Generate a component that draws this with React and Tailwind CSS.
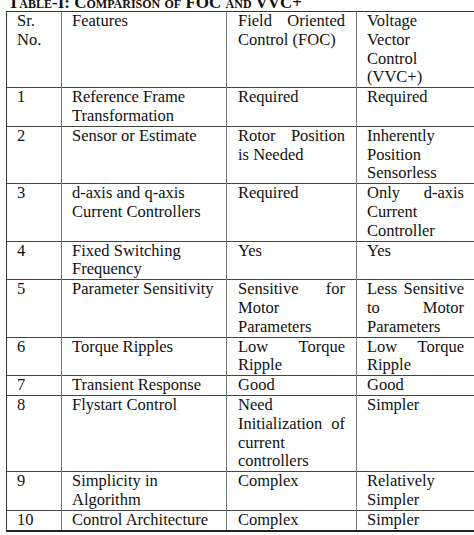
import React from "react";

const rows = [
  ["1", "Reference Frame Transformation", "Required", "Required"],
  ["2", "Sensor or Estimate", "Rotor Position is Needed", "Inherently Position Sensorless"],
  ["3", "d-axis and q-axis Current Controllers", "Required", "Only d-axis Current Controller"],
  ["4", "Fixed Switching Frequency", "Yes", "Yes"],
  ["5", "Parameter Sensitivity", "Sensitive for Motor Parameters", "Less Sensitive to Motor Parameters"],
  ["6", "Torque Ripples", "Low Torque Ripple", "Low Torque Ripple"],
  ["7", "Transient Response", "Good", "Good"],
  ["8", "Flystart Control", "Need Initialization of current controllers", "Simpler"],
  ["9", "Simplicity in Algorithm", "Complex", "Relatively Simpler"],
  ["10", "Control Architecture", "Complex", "Simpler"],
];

export default function App() {
  return (
    <div className="w-[474px] h-[535px] overflow-hidden bg-white text-[#111] font-['Liberation_Serif','Times_New_Roman',serif]">
      <div className="-mt-[6px] h-[17px] pl-[8px] text-[17px] leading-none font-bold [font-variant:small-caps] whitespace-nowrap">
        Table-I: Comparison of FOC and VVC+
      </div>
      <table className="ml-[6px] w-[469px] table-fixed border-collapse text-[16.5px] leading-[18.8px]">
        <colgroup>
          <col className="w-[55px]" />
          <col className="w-[165px]" />
          <col className="w-[130px]" />
          <col className="w-[119px]" />
        </colgroup>
        <thead>
          <tr className="border-t border-[#333]">
            <th className="border-l border-l-[#333] border-r border-r-[#777] px-[10px] py-0 text-left font-normal align-top">
              Sr. No.
            </th>
            <th className="border-r border-r-[#777] px-[10px] py-0 text-left font-normal align-top">
              Features
            </th>
            <th className="border-r border-r-[#777] pl-[11px] pr-[11px] py-0 text-justify font-normal align-top">
              Field Oriented Control (FOC)
            </th>
            <th className="border-r border-r-[#333] pl-[10px] pr-[11px] py-0 text-left font-normal align-top">
              Voltage
              <br />
              Vector
              <br />
              Control
              <br />
              (VVC+)
            </th>
          </tr>
        </thead>
        <tbody>
          {rows.map((r, i) => (
            <tr
              key={r[0]}
              className={
                i === rows.length - 1
                  ? "border-t border-t-[#444] border-b-2 border-b-[#222]"
                  : "border-t border-t-[#444]"
              }
            >
              <td className="border-l border-l-[#333] border-r border-r-[#777] px-[10px] py-0 align-top">
                {r[0]}
              </td>
              <td className="border-r border-r-[#777] px-[10px] py-0 align-top">{r[1]}</td>
              <td className="border-r border-r-[#777] pl-[11px] pr-[11px] py-0 align-top text-justify">{r[2]}</td>
              <td className="border-r border-r-[#333] pl-[10px] pr-[11px] py-0 align-top text-justify">{r[3]}</td>
            </tr>
          ))}
        </tbody>
      </table>
    </div>
  );
}
